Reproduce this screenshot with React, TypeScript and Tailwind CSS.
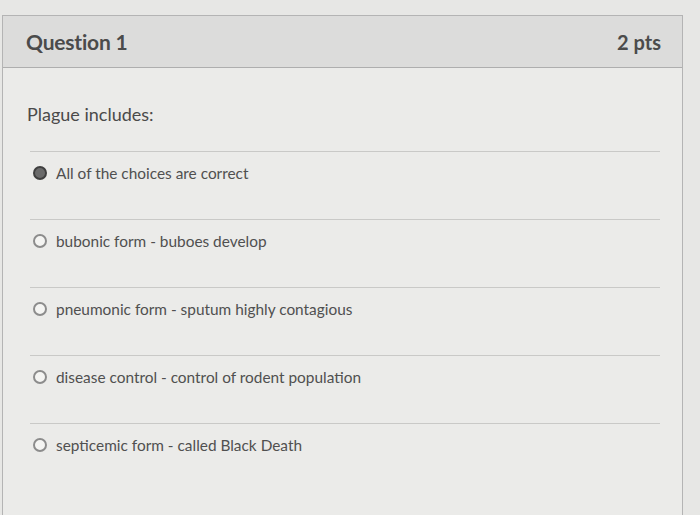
import React from "react";

const options = [
  { label: "All of the choices are correct", selected: true },
  { label: "bubonic form - buboes develop", selected: false },
  { label: "pneumonic form - sputum highly contagious", selected: false },
  { label: "disease control - control of rodent population", selected: false },
  { label: "septicemic form - called Black Death", selected: false },
];

export default function App() {
  return (
    <div
      className="w-[700px] h-[515px] overflow-hidden bg-[#e7e7e5] pt-[15px] pl-[2px]"
      style={{ fontFamily: "Lato, 'Open Sans', sans-serif" }}
    >
      <div className="w-[681px] h-[500px] border border-b-0 border-[#b4b4b4] bg-[#ebebe9] flex flex-col">
        <div className="h-[52px] shrink-0 bg-[#dcdcdb] border-b border-[#aeaeae] flex items-center justify-between pl-[23px] pr-[21px] text-[#4b4b4b]">
          <span className="text-[21px] font-bold tracking-[-0.2px]">Question 1</span>
          <span className="text-[20px] font-bold">2 pts</span>
        </div>
        <div className="pt-[34px] pl-[24px] text-[18px] leading-[24px] text-[#4a4a4a]">
          Plague includes:
        </div>
        <div className="mt-[25px] ml-[27px] mr-[22px]">
          {options.map((o) => (
            <div key={o.label} className="h-[68px] border-t border-[#c9c9c7] pt-[11px] pl-[3px] flex items-start">
              <div className="flex items-center gap-[9px] h-[20px]">
                {o.selected ? (
                  <span className="block w-[14px] h-[14px] rounded-full bg-[#6a6a6a] border-[2px] border-[#3f3f3f] shrink-0" />
                ) : (
                  <span className="block w-[14px] h-[14px] rounded-full bg-[#f4f4f2] border-2 border-[#8c8c8c] shrink-0" />
                )}
                <span className="text-[15.4px] leading-[20px] text-[#505050]">{o.label}</span>
              </div>
            </div>
          ))}
        </div>
      </div>
    </div>
  );
}
